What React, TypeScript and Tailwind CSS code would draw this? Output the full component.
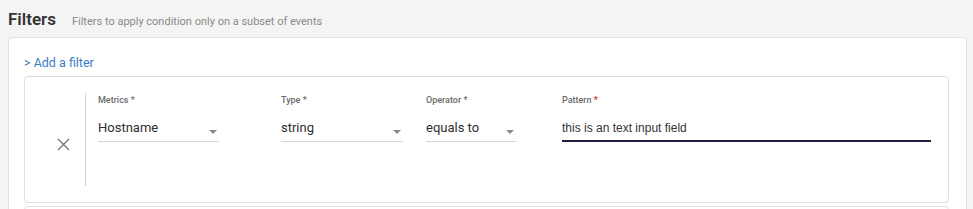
import React from "react";

const Caret = () => (
  <span className="absolute right-[2px] top-[11px] w-0 h-0 border-l-[4px] border-r-[4px] border-t-[4px] border-l-transparent border-r-transparent border-t-[#8a8a8a]" />
);

function SelectField({ label, value, width, className = "" }: { label: string; value: string; width: string; className?: string }) {
  return (
    <div className={`flex flex-col ${width} ${className}`}>
      <span className="text-[9px] font-medium text-[#6b6b6b] leading-[14px]">{label} *</span>
      <div className="relative mt-[12px] h-[23px] border-b border-[#d6d6d6] text-[13px] text-[#2e2e2e] leading-[18px]">
        {value}
        <Caret />
      </div>
    </div>
  );
}

export default function App() {
  return (
    <div className="w-[973px] h-[209px] overflow-hidden bg-[#f4f4f4] pl-[8px] pr-[6px]" style={{ fontFamily: "Roboto, 'Liberation Sans', sans-serif" }}>
      {/* Header */}
      <div className="flex items-baseline h-[37px] pt-[7px]">
        <span className="text-[17px] font-semibold text-[#333] leading-[24px]">Filters</span>
        <span className="ml-[16px] text-[11px] text-[#8a8a8a]">Filters to apply condition only on a subset of events</span>
      </div>

      {/* Card */}
      <div className="bg-white border border-[#e3e3e3] rounded-[4px] pl-[15px] pr-[17px] pt-[16px] h-[200px]">
        <div className="text-[12.5px] text-[#3a7cc7] leading-[18px]">&gt; Add a filter</div>

        <div className="mt-[4px] h-[127px] border border-[#dedede] rounded-[4px] flex">
          <div className="w-[60px] flex justify-center pt-[61px] pl-[16px]">
            <svg width="13" height="13" viewBox="0 0 13 13" fill="none" stroke="#777" strokeWidth="1.4">
              <path d="M1 1 L12 12 M12 1 L1 12" />
            </svg>
          </div>
          <div className="my-[16px] border-l border-[#d4d4d4] flex pl-[12px]">
            <SelectField label="Metrics" value="Hostname" width="w-[121px]" />
            <SelectField label="Type" value="string" width="w-[122px]" className="ml-[62px]" />
            <SelectField label="Operator" value="equals to" width="w-[90px]" className="ml-[23px]" />
            <div className="flex flex-col w-[369px] ml-[46px]">
              <span className="text-[9px] font-medium text-[#6b6b6b] leading-[14px]">
                Pattern <span className="text-[#d0142c]">*</span>
              </span>
              <div className="mt-[12px] h-[23px] border-b-2 border-[#1f1d3a] text-[12px] text-[#333] leading-[18px]" style={{ fontFamily: "'Liberation Sans', Arial, sans-serif" }}>
                this is an text input field
              </div>
            </div>
          </div>
        </div>

        <div className="mt-[3px] h-[20px] border border-[#dedede] rounded-[4px]" />
      </div>
    </div>
  );
}
